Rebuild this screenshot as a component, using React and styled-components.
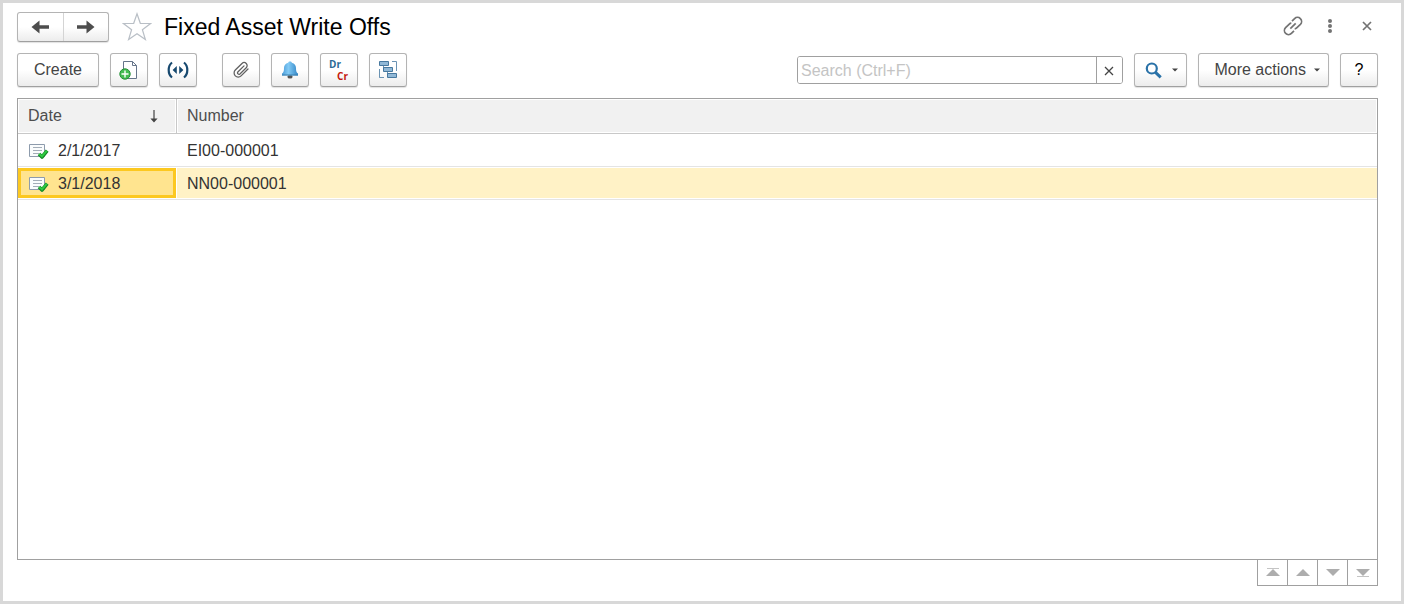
import styled, { createGlobalStyle, css } from "styled-components";
import { useState } from "react";

const GlobalStyle = createGlobalStyle`
  * {
    box-sizing: border-box;
  }

  body {
    margin: 0;
    background: #fff;
    color: #333;
    font-family: "Liberation Sans", Arial, sans-serif;
    font-size: 16px;
    line-height: 20px;
  }

  button,
  input {
    font: inherit;
    color: inherit;
  }

  svg {
    display: block;
    flex: none;
  }
`;

const Window = styled.main`
  display: flex;
  flex-direction: column;
  min-height: 100vh;
  padding: 9px 23px 15px 14px;
  border: 3px solid #d8d8d8;
`;

const Header = styled.header`
  display: flex;
  align-items: center;
  height: 30px;
`;

const raised = css`
  border: 1px solid #b4b4b4;
  border-bottom-color: #a0a0a0;
  border-radius: 3px;
  background: linear-gradient(#fff 0%, #fff 50%, #ececec 100%);
  box-shadow: 0 1px 1px rgba(0, 0, 0, 0.12);
`;

const History = styled.nav`
  display: flex;
  width: 92px;
  height: 30px;
  ${raised}
`;

const HistoryButton = styled.button`
  display: flex;
  flex: 1;
  align-items: center;
  justify-content: center;
  padding: 0;
  border: none;
  background: none;

  & + & {
    border-left: 1px solid #d4d4d4;
  }
`;

const PlainButton = styled.button`
  display: flex;
  align-items: center;
  justify-content: center;
  width: 22px;
  height: 28px;
  padding: 0;
  border: none;
  background: none;
`;

const FavoriteButton = styled(PlainButton)`
  width: 30px;
  margin: 0 12px 0 13px;
`;

const Title = styled.h1`
  margin: 0;
  color: #000;
  font-size: 23px;
  font-weight: 400;
  line-height: 28px;
`;

const WindowControls = styled.div`
  display: flex;
  align-self: flex-start;
  gap: 15px;
  margin-left: auto;
`;

const Toolbar = styled.div`
  display: flex;
  align-items: center;
  gap: 11px;
  height: 34px;
  margin: 11px 0;
`;

const Group = styled.div`
  display: flex;
  gap: 11px;
  margin-right: ${(props) => (props.$spaced ? "14px" : "0")};
`;

const Button = styled.button`
  display: flex;
  align-items: center;
  justify-content: center;
  gap: 8px;
  width: ${(props) => props.$width || "38px"};
  height: 34px;
  padding: 0;
  color: ${(props) => props.$color || "#444"};
  white-space: nowrap;
  ${raised}
`;

const MenuButton = styled(Button)`
  justify-content: flex-end;
  padding-right: 8px;
`;

const Search = styled.div`
  display: flex;
  width: 326px;
  height: 28px;
  margin-left: auto;
  overflow: hidden;
  border: 1px solid #a0a0a0;
  border-radius: 3px;
`;

const SearchInput = styled.input`
  flex: 1;
  min-width: 0;
  padding: 2px 3px 0;
  border: none;
  outline: none;

  &::placeholder {
    color: #c4c4c4;
  }
`;

const ClearButton = styled.button`
  display: flex;
  align-items: center;
  justify-content: center;
  width: 26px;
  padding: 2px 2px 0 0;
  border: none;
  border-left: 1px solid #a0a0a0;
  background: #fff;
`;

const Postings = styled.span`
  display: flex;
  flex-direction: column;
  width: 20px;
  padding-right: 1px;
  font-family: "Open Sans", sans-serif;
  font-size: 10px;
  font-weight: 700;
  line-height: 12px;
`;

const Debit = styled.span`
  color: #2b6a96;
  text-align: left;
`;

const Credit = styled.span`
  color: #c4170c;
  text-align: right;
`;

const List = styled.section`
  flex: 1;
  border: 1px solid #a0a0a0;
`;

const Table = styled.table`
  width: 100%;
  border-spacing: 0;
  table-layout: fixed;
`;

const HeadCell = styled.th`
  width: ${(props) => props.$width || "auto"};
  height: 35px;
  padding: 1px;
  border-bottom: 1px solid #c8c8c8;
  color: #4d4d4d;
  font-weight: 400;
  text-align: left;

  & + & {
    border-left: 1px solid #c8c8c8;
  }
`;

const HeadContent = styled.div`
  display: flex;
  align-items: center;
  justify-content: space-between;
  height: 32px;
  padding: 0 17px 0 9px;
  background: #f1f1f1;
`;

const Cell = styled.td`
  height: 33px;
  padding: 1px 0;
  border-bottom: 1px solid #e4e4e4;

  & + & {
    padding-left: 1px;
  }
`;

const CellContent = styled.div`
  display: flex;
  align-items: center;
  gap: 9px;
  height: 30px;
  padding: 2px 10px 0;
  background: ${(props) => (props.$selected ? "#fff2c6" : "#fff")};
`;

const DateContent = styled(CellContent)`
  padding: 2px 8px 0;
  border: 3px solid ${(props) => (props.$selected ? "#fcc820" : "#fff")};
  background: ${(props) => (props.$selected ? "#ffe48f" : "#fff")};
`;

const Pager = styled.div`
  display: flex;
  align-self: flex-end;
  border: 1px solid #a0a0a0;
  border-top: none;
`;

const PagerButton = styled.button`
  display: flex;
  align-items: center;
  justify-content: center;
  width: 30px;
  height: 25px;
  padding: 0;
  border: none;
  background: #fff;

  & + & {
    border-left: 1px solid #a0a0a0;
  }

  &:first-child {
    width: 29px;
  }
`;

function ArrowIcon({ forward }) {
  return (
    <svg width="18" height="14" viewBox="0 0 18 14" fill="#4d4d4d">
      {forward ? (
        <path d="M0 5.2h9.5V0.5L17.5 7l-8 6.5V8.8H0z" />
      ) : (
        <path d="M18 5.2H8.5V0.5L.5 7l8 6.5V8.8H18z" />
      )}
    </svg>
  );
}

function StarIcon() {
  return (
    <svg width="30" height="30" viewBox="0 0 30 30" fill="#fff">
      <path
        d="M15 1.8l3.3 9.5 10.3.2-8.2 6.2 3 9.9L15 21.8l-8.4 5.8 3-9.9-8.2-6.2 10.3-.2z"
        stroke="#b9bfc6"
        strokeWidth="1.2"
      />
    </svg>
  );
}

function LinkIcon() {
  return (
    <svg
      width="20"
      height="20"
      viewBox="0 0 20 20"
      fill="none"
      stroke="#737373"
      strokeWidth="1.7"
    >
      <path d="M9 5.2l2.6-2.6a4 4 0 0 1 5.8 5.7l-3.7 3.6a3.3 3.3 0 0 1-2 .9" />
      <path d="M11 14.8l-2.6 2.6a4 4 0 0 1-5.8-5.7l3.7-3.6a3.3 3.3 0 0 1 2-.9" />
      <path d="M7.3 12.7l5.4-5.4" />
    </svg>
  );
}

function DotsIcon() {
  return (
    <svg width="6" height="16" viewBox="0 0 6 16" fill="#737373">
      <circle cx="3" cy="3" r="2" />
      <circle cx="3" cy="8" r="2" />
      <circle cx="3" cy="13" r="2" />
    </svg>
  );
}

function CrossIcon({ color = "#444", strokeWidth = 1.3 }) {
  return (
    <svg width="10" height="10" viewBox="0 0 10 10" stroke={color}>
      <path d="M1 1l8 8M9 1L1 9" strokeWidth={strokeWidth} />
    </svg>
  );
}

function CopyIcon() {
  return (
    <svg width="20" height="20" viewBox="0 0 20 20" fill="none">
      <path d="M4.5 1.5h9l4 4v13h-13z" fill="#fff" stroke="#66758a" />
      <path d="M13.5 1.5v4h4" stroke="#66758a" />
      <circle cx="6" cy="14" r="5.2" fill="#45bd53" stroke="#279138" />
      <path d="M6 10.5v7M2.5 14h7" stroke="#fff" strokeWidth="1.4" />
    </svg>
  );
}

function IntervalIcon() {
  return (
    <svg width="22" height="18" viewBox="0 0 22 18" fill="#17496f">
      <path
        d="M5 1.5C.6 5 .6 13 5 16.5M17 1.5c4.4 3.5 4.4 11.5 0 15"
        fill="none"
        stroke="#17496f"
        strokeWidth="2.2"
      />
      <path d="M9.8 5v8L5.6 9zM12.2 5v8l4.2-4z" />
    </svg>
  );
}

function ClipIcon() {
  return (
    <svg
      width="18"
      height="18"
      viewBox="0 0 24 24"
      fill="none"
      stroke="#606060"
      strokeWidth="1.7"
      strokeLinecap="round"
    >
      <path d="M16 6.5l-8.2 8.1a2 2 0 0 0 2.8 2.8l8.4-8.4a4 4 0 1 0-5.7-5.7L4.4 12.1a5.4 5.4 0 1 0 7.7 7.7l9.2-9.2" />
    </svg>
  );
}

function BellIcon() {
  return (
    <svg width="18" height="18" viewBox="0 0 18 18">
      <defs>
        <linearGradient id="bell">
          <stop offset="0" stopColor="#4a9bd8" />
          <stop offset="0.4" stopColor="#82caf5" />
          <stop offset="1" stopColor="#3387c7" />
        </linearGradient>
      </defs>
      <ellipse cx="9" cy="15.7" rx="2.6" ry="1.9" fill="#555" />
      <path
        d="M9 .5c1 0 1.7.6 1.8 1.2C13.6 2.4 15 4.4 15 6.9c0 3.1.4 4.5 2 5.6v1.9H1v-1.9c1.6-1.1 2-2.5 2-5.6 0-2.5 1.4-4.5 4.2-5.2C7.3 1.1 8 .5 9 .5z"
        fill="url(#bell)"
      />
      <path d="M1 14h16" stroke="#3b7eae" />
    </svg>
  );
}

function StructureIcon() {
  return (
    <svg width="20" height="20" viewBox="0 0 20 20" fill="none">
      <path
        d="M14 1.5h4.5V11M1.5 9v8.5H6M5.5 5.5v4M9.5 11.5v4M5.5 17.5h-4"
        stroke="#6b93b3"
      />
      <g fill="#91b8d6" stroke="#47789f">
        <path d="M1.5 1.5h9v4h-9zM5.5 7.5h9v4h-9zM9.5 13.5h9v4h-9z" />
      </g>
    </svg>
  );
}

function SearchIcon() {
  return (
    <svg width="19" height="17" viewBox="0 0 19 17" fill="none">
      <g stroke="#2a72a8">
        <circle cx="6.8" cy="6.5" r="5" strokeWidth="2.2" />
        <path d="M10.5 10.3l5.2 5" strokeWidth="3" />
      </g>
    </svg>
  );
}

function CaretIcon() {
  return (
    <svg width="6" height="4" viewBox="0 0 6 4" fill="#444">
      <path d="M0 .5h6l-3 3z" />
    </svg>
  );
}

function SortIcon() {
  return (
    <svg width="8" height="14" viewBox="0 0 8 14" fill="#444">
      <path d="M3.4 1h1.2v8.5h3L4 13.5.4 9.5h3z" />
    </svg>
  );
}

function DocumentIcon() {
  return (
    <svg width="20" height="16" viewBox="0 0 20 16" fill="none">
      <path d="M.5 1.5h15v12H.5z" fill="#fafcfd" stroke="#8d9bac" />
      <path d="M4 4.5h9M4 7.5h9M4 10.5h6" stroke="#a3adb8" />
      <path
        d="M10 11l3 3 5.2-6.4"
        stroke="#148a25"
        strokeWidth="3.6"
        strokeLinejoin="round"
      />
      <path d="M10.3 10.9l2.7 2.5 4.8-5.8" stroke="#2fca42" strokeWidth="2" />
    </svg>
  );
}

const pages = [
  { label: "First page", path: "M7 2l7 7H0z", bar: 1 },
  { label: "Previous page", path: "M7 2l7 7H0z" },
  { label: "Next page", path: "M0 2h14l-7 7z" },
  { label: "Last page", path: "M0 2h14l-7 7z", bar: 9 },
];

const documents = [
  { date: "2/1/2017", number: "EI00-000001" },
  { date: "3/1/2018", number: "NN00-000001" },
];

function DocumentRow({ document, selected, onSelect }) {
  return (
    <tr onClick={onSelect} aria-selected={selected}>
      <Cell>
        <DateContent $selected={selected}>
          <DocumentIcon />
          {document.date}
        </DateContent>
      </Cell>
      <Cell>
        <CellContent $selected={selected}>{document.number}</CellContent>
      </Cell>
    </tr>
  );
}

function App() {
  const [query, setQuery] = useState("");
  const [selected, setSelected] = useState("NN00-000001");

  return (
    <>
      <GlobalStyle />
      <Window>
        <Header>
          <History>
            <HistoryButton aria-label="Back">
              <ArrowIcon />
            </HistoryButton>
            <HistoryButton aria-label="Forward">
              <ArrowIcon forward />
            </HistoryButton>
          </History>
          <FavoriteButton aria-label="Add to favorites">
            <StarIcon />
          </FavoriteButton>
          <Title>Fixed Asset Write Offs</Title>
          <WindowControls>
            <PlainButton aria-label="Get link">
              <LinkIcon />
            </PlainButton>
            <PlainButton aria-label="Menu">
              <DotsIcon />
            </PlainButton>
            <PlainButton aria-label="Close">
              <CrossIcon color="#737373" strokeWidth={1.7} />
            </PlainButton>
          </WindowControls>
        </Header>

        <Toolbar>
          <Group $spaced>
            <Button $width="82px">Create</Button>
            <Button aria-label="Copy">
              <CopyIcon />
            </Button>
            <Button aria-label="Set period">
              <IntervalIcon />
            </Button>
          </Group>
          <Group>
            <Button aria-label="Attachments">
              <ClipIcon />
            </Button>
            <Button aria-label="Reminder">
              <BellIcon />
            </Button>
            <Button>
              <Postings>
                <Debit>Dr</Debit>
                <Credit>Cr</Credit>
              </Postings>
            </Button>
            <Button aria-label="Related documents">
              <StructureIcon />
            </Button>
          </Group>
          <Search>
            <SearchInput
              aria-label="Search"
              placeholder="Search (Ctrl+F)"
              value={query}
              onChange={(e) => setQuery(e.target.value)}
            />
            <ClearButton aria-label="Clear" onClick={() => setQuery("")}>
              <CrossIcon />
            </ClearButton>
          </Search>
          <MenuButton $width="53px" aria-label="Find">
            <SearchIcon />
            <CaretIcon />
          </MenuButton>
          <MenuButton $width="131px">
            More actions
            <CaretIcon />
          </MenuButton>
          <Button $color="#000">?</Button>
        </Toolbar>

        <List>
          <Table>
            <thead>
              <tr>
                <HeadCell $width="158px">
                  <HeadContent>
                    Date
                    <SortIcon />
                  </HeadContent>
                </HeadCell>
                <HeadCell>
                  <HeadContent>Number</HeadContent>
                </HeadCell>
              </tr>
            </thead>
            <tbody>
              {documents.map((document) => (
                <DocumentRow
                  key={document.number}
                  document={document}
                  selected={document.number === selected}
                  onSelect={() => setSelected(document.number)}
                />
              ))}
            </tbody>
          </Table>
        </List>
        <Pager>
          {pages.map((page) => (
            <PagerButton key={page.label} aria-label={page.label}>
              <svg width="14" height="11" viewBox="0 0 14 11" fill="#adadad">
                <path d={page.path} />
                {page.bar && (
                  <path d={`M1 ${page.bar + 0.5}h12`} stroke="#c4c4c4" />
                )}
              </svg>
            </PagerButton>
          ))}
        </Pager>
      </Window>
    </>
  );
}

export default App;
